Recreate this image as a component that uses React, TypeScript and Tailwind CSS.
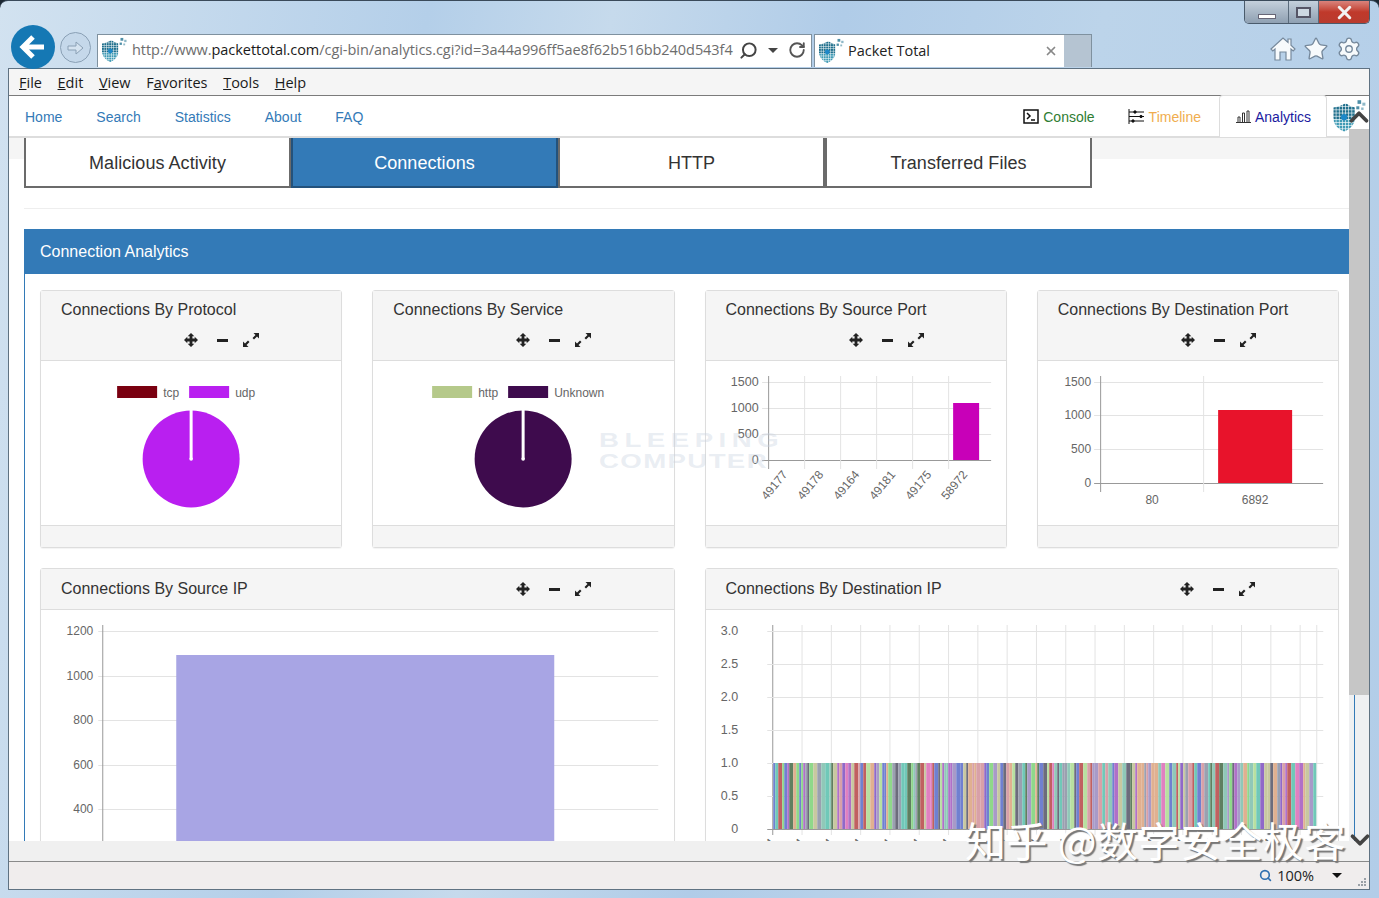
import { Star, Settings, RotateCw, Search, X, ChevronDown, ChevronUp } from 'lucide-react'

const CHROME = 'font-["Open_Sans","Noto_Sans",sans-serif]'
const SANS = 'font-["Liberation_Sans",Arial,sans-serif]'

const MENU = [
  { before: '', mark: 'F', after: 'ile' },
  { before: '', mark: 'E', after: 'dit' },
  { before: '', mark: 'V', after: 'iew' },
  { before: 'F', mark: 'a', after: 'vorites' },
  { before: '', mark: 'T', after: 'ools' },
  { before: '', mark: 'H', after: 'elp' },
]

const TABS = ['Malicious Activity', 'Connections', 'HTTP', 'Transferred Files']

const STRIPE_COLORS = [
  '#a89ac8', '#8fd88a', '#d8a0a8', '#6c6c7c', '#b070c8', '#90c8b8', '#e0b090', '#5f7f60',
  '#c06060', '#7080d0', '#c8c8a0', '#70c8b8', '#e080c0', '#9aa0b0', '#b8e0a0', '#9068c8',
]

// bars of the destination IP chart, one colour per address
function stripes() {
  const out: { x: number; w: number; c: string }[] = []
  let seed = 7
  let x = 0
  while (x < 543) {
    seed = (seed * 137 + 59) % 1009
    const w = 2 + (seed % 3)
    out.push({ x, w, c: STRIPE_COLORS[seed % STRIPE_COLORS.length] })
    x += w
  }
  return out
}

function Shield({ size = 26, id }: { size?: number; id: string }) {
  const dots = []
  for (let r = 0; r < 9; r++) {
    for (let c = 0; c < 8; c++) {
      dots.push(<rect key={`${r}-${c}`} x={1 + c * 2.6} y={4 + r * 2.6} width={2.1} height={2.1} fill={r > 4 ? '#3f9ab4' : '#1f6f8c'} />)
    }
  }
  return (
    <svg width={size} height={size} viewBox="0 0 28 28" className="shrink-0">
      <clipPath id={id}>
        <path d="M1 7Q8 6 11 3q3 3 8 4v8q0 8-9 12Q1 23 1 15z" />
      </clipPath>
      <g clipPath={`url(#${id})`}>{dots}</g>
      <circle cx="10" cy="15" r="2.6" fill="#1e88c8" />
      <rect x={21} y={1} width={3} height={3} fill="#4f8fa8" />
      <rect x={25} y={3} width={2.5} height={2.5} fill="#8fb8c8" />
      <rect x={20} y={6} width={2.5} height={2.5} fill="#4f8fa8" />
      <rect x={24} y={7} width={2} height={2} fill="#8fb8c8" />
    </svg>
  )
}

function HomeIcon() {
  return (
    <svg width="26" height="26" viewBox="0 0 26 26" fill="#f7fafc" stroke="#76899c" strokeWidth="1.200">
      <path d="M1 13 13 2l5 4.500V3h3v6.300L25 13l-1.800 2L21 13v11h-5v-8h-6v8H5V13l-2.200 2z" />
    </svg>
  )
}

function MoveIcon() {
  return (
    <svg width="14" height="14" viewBox="0 0 14 14" fill="#222">
      <path d="M7 0 10.300 3.300H8.400V5.600H10.700V3.700L14 7l-3.300 3.300V8.400H8.400v2.300h1.900L7 14l-3.300-3.300h1.900V8.400H3.300v1.900L0 7l3.300-3.300v1.900h2.300V3.300H3.700z" />
    </svg>
  )
}

function CardTools() {
  return (
    <div className="flex items-center h-[14px]">
      <MoveIcon />
      <span className="w-[11px] h-[3px] bg-[#222] ml-[19px]" />
      <svg width="16" height="14" viewBox="0 0 16 14" fill="#222" className="ml-[15px]">
        <path d="M16 0v5.500l-2-2-3 3-1.500-1.500 3-3-2-2zM0 14V8.500l2 2 3-3L6.500 9l-3 3 2 2z" />
      </svg>
    </div>
  )
}

function Card({ title, wide, children }: { title: string; wide?: boolean; children: React.ReactNode }) {
  return (
    <div className={`border border-[#ddd] rounded-[3px] bg-white shadow-[0_1px_1px_rgba(0,0,0,0.05)] ${wide ? 'col-span-2' : ''}`}>
      <div className={`bg-[#f5f5f5] border-b border-[#ddd] pl-[20px] ${wide ? 'h-[41px] flex items-center justify-between pr-[83px]' : 'h-[70px] pt-[9px]'}`}>
        <div className="text-[16px] leading-[20px] text-[#333]">{title}</div>
        {wide ? <CardTools /> : <div className="flex justify-center mt-[13px] pl-[41px]"><CardTools /></div>}
      </div>
      {children}
      {!wide && <div className="h-[22px] bg-[#f5f5f5] border-t border-[#ddd]" />}
    </div>
  )
}

function PieChart({ a, ac, b, bc, fill, ax, bx }: { a: string; ac: string; b: string; bc: string; fill: string; ax: number; bx: number }) {
  return (
    <svg viewBox="1 0 300 164" className="block w-full h-[164px]">
      <rect x={ax} y={25} width={40} height={12} fill={ac} />
      <text x={ax + 46} y={36} fontSize="12" fill="#666">{a}</text>
      <rect x={bx} y={25} width={40} height={12} fill={bc} />
      <text x={bx + 46} y={36} fontSize="12" fill="#666">{b}</text>
      <circle cx={151} cy={98} r={48.500} fill={fill} />
      <path d="M151 98V49" stroke="#fff" strokeWidth="3" />
      <circle cx={151} cy={98} r={1.800} fill="#fff" />
    </svg>
  )
}

function SourcePortChart() {
  const ys = [{ y: 21, t: '1500' }, { y: 47, t: '1000' }, { y: 73, t: '500' }, { y: 99, t: '0' }]
  const xs = [63, 99, 135, 171, 207, 243]
  const names = ['49177', '49178', '49164', '49181', '49175', '58972']
  return (
    <svg viewBox="1 0 300 164" className="block w-full h-[164px]">
      {ys.map((l) => (
        <g key={l.t}>
          <line x1={57} x2={286} y1={l.y + 0.5} y2={l.y + 0.5} stroke={l.t === '0' ? '#999' : '#e3e3e3'} />
          <text x={53.500} y={l.y + 3.500} fontSize="12.500" fill="#666" textAnchor="end">{l.t}</text>
        </g>
      ))}
      {xs.map((x, i) => (
        <g key={x}>
          <line x1={x + 0.5} x2={x + 0.5} y1={15} y2={108} stroke={i === 0 ? '#999' : '#e3e3e3'} />
          <text x={x + 20} y={114} fontSize="12" fill="#666" textAnchor="end" transform={`rotate(-50 ${x + 20} 114)`}>{names[i]}</text>
        </g>
      ))}
      <rect x={248} y={42} width={26} height={57} fill="#c800b8" />
    </svg>
  )
}

function DestPortChart() {
  const ys = [{ y: 21, t: '1500' }, { y: 54, t: '1000' }, { y: 88, t: '500' }, { y: 122, t: '0' }]
  return (
    <svg viewBox="1 0 300 164" className="block w-full h-[164px]">
      {ys.map((l) => (
        <g key={l.t}>
          <line x1={57} x2={286} y1={l.y + 0.5} y2={l.y + 0.5} stroke={l.t === '0' ? '#999' : '#e3e3e3'} />
          <text x={54} y={l.y + 3.500} fontSize="12" fill="#666" textAnchor="end">{l.t}</text>
        </g>
      ))}
      <line x1={63.500} x2={63.500} y1={15} y2={131} stroke="#999" />
      <line x1={166.500} x2={166.500} y1={15} y2={131} stroke="#e3e3e3" />
      <rect x={181} y={49} width={74} height={73} fill="#e8132b" />
      <text x={115} y={143} fontSize="12" fill="#666" textAnchor="middle">80</text>
      <text x={218} y={143} fontSize="12" fill="#666" textAnchor="middle">6892</text>
    </svg>
  )
}

function SourceIpChart() {
  const ys = [{ y: 21, t: '1200' }, { y: 66, t: '1000' }, { y: 110, t: '800' }, { y: 155, t: '600' }, { y: 199, t: '400' }]
  return (
    <svg viewBox="1 0 632 260" className="block w-full h-[260px]">
      {ys.map((l) => (
        <g key={l.t}>
          <line x1={58} x2={618} y1={l.y + 0.5} y2={l.y + 0.5} stroke="#e3e3e3" />
          <text x={53} y={l.y + 3.500} fontSize="12" fill="#666" textAnchor="end">{l.t}</text>
        </g>
      ))}
      <line x1={62.500} x2={62.500} y1={15} y2={260} stroke="#999" />
      <rect x={136} y={45} width={378} height={215} fill="#a8a5e4" />
    </svg>
  )
}

function DestIpChart() {
  const ys = ['3.0', '2.5', '2.0', '1.5', '1.0', '0.5', '0']
  const vs = Array.from({ length: 19 }, (_, i) => 67 + i * 29.300)
  return (
    <svg viewBox="1 0 632 260" className="block w-full h-[260px]">
      {vs.map((x, i) => (
        <g key={x}>
          <line x1={x + 0.5} x2={x + 0.5} y1={15} y2={225} stroke={i === 0 ? '#999' : '#e3e3e3'} />
          <text x={x + 3} y={233} fontSize="12" fill="#666" textAnchor="end" transform={`rotate(-50 ${x + 3} 233)`}>10.0.0.4</text>
        </g>
      ))}
      <line x1={611.500} x2={611.500} y1={15} y2={225} stroke="#e3e3e3" />
      {ys.map((t, i) => (
        <g key={t}>
          <line x1={62} x2={618} y1={21.500 + i * 33} y2={21.500 + i * 33} stroke={t === '0' ? '#999' : '#e3e3e3'} />
          <text x={33} y={25 + i * 33} fontSize="12.500" fill="#666" textAnchor="end">{t}</text>
        </g>
      ))}
      {stripes().map((s) => (
        <rect key={s.x} x={68 + s.x} y={153} width={s.w} height={66} fill={s.c} />
      ))}
    </svg>
  )
}

export default function App() {
  return (
    <div className="w-[1379px] h-[898px] bg-[#1c2833]">
      <div className={`relative w-full h-full overflow-hidden rounded-t-[8px] border-t border-[#3a4a5a] flex flex-col bg-[linear-gradient(100deg,#d2e2f0_0%,#b4cfe9_28%,#c6daec_40%,#b0cce8_55%,#bcd4ea_72%,#b2cde8_100%)] pl-[8px] pr-[9px] pb-[8px] ${CHROME}`}>
        {/* Title bar */}
        <div className="h-[23px] flex justify-end">
          <div className="w-[126px] h-[23px] flex border border-t-0 border-[#4a5b6c] rounded-b-[5px] overflow-hidden">
            <div className="w-[44px] flex items-center justify-center bg-gradient-to-b from-[#c4d0dc] to-[#8fa0b2] border-r border-[#5a6b7c]">
              <span className="w-[18px] h-[5px] bg-white border border-[#667] mt-[8px]" />
            </div>
            <div className="w-[30px] flex items-center justify-center bg-gradient-to-b from-[#c4d0dc] to-[#8fa0b2] border-r border-[#5a6b7c]">
              <span className="w-[15px] h-[11px] border-2 border-[#556] bg-[#cdd8e2]" />
            </div>
            <div className="flex-1 flex items-center justify-center bg-gradient-to-b from-[#d9837c] via-[#c0392b] to-[#b93b2e]">
              <X size={21} strokeWidth={3.500} color="#f2f2f2" />
            </div>
          </div>
        </div>

        {/* Address and tabs */}
        <div className="h-[44px] flex items-start pt-[11px]">
          <div className="w-[44px] h-[44px] -mt-[10px] ml-[3px] rounded-full bg-[#1578b4] flex items-center justify-center z-10 shrink-0">
            <svg width="28" height="26" viewBox="0 0 28 26" fill="none" stroke="#fff" strokeWidth="5">
              <path d="M25 13H5M14 3 4 13l10 10" />
            </svg>
          </div>
          <div className="w-[31px] h-[31px] -mt-[3px] ml-[5px] rounded-full border border-[#8aa0b5] bg-[#c5d8ea] flex items-center justify-center shrink-0">
            <svg width="18" height="16" viewBox="0 0 18 16" fill="#d5e3f0" stroke="#8aa0b5">
              <path d="M1 6h8V2l7 6-7 6v-4H1z" />
            </svg>
          </div>
          <div className="w-[715px] h-[33px] ml-[6px] -mt-[1px] bg-white border border-[#7f919f] border-b-0 flex items-center pl-[3px] pb-[2px] shrink-0">
            <Shield id="shield-url" />
            <span className="ml-[5px] w-[602px] whitespace-nowrap overflow-hidden text-[14.500px] text-[#6d6d6d] tracking-[-0.05px]">
              http://www.<span className="text-[#1a1a1a]">packettotal.com</span>/cgi-bin/analytics.cgi?id=3a44a996ff5ae8f62b516bb240d543f4
            </span>
            <Search size={19} strokeWidth={2.500} color="#444" className="ml-[5px] -scale-x-100" />
            <span className="ml-[10px] border-x-[5px] border-x-transparent border-t-[5px] border-t-[#444]" />
            <RotateCw size={18} strokeWidth={2.500} color="#555" className="ml-[10px]" />
          </div>
          <div className="w-[250px] h-[33px] ml-[2px] -mt-[1px] bg-white border-t border-l border-[#7f919f] flex items-center pl-[3px] shrink-0">
            <Shield id="shield-tab" />
            <span className="ml-[4px] text-[14.500px] text-[#222]">Packet Total</span>
            <X size={14} strokeWidth={3} color="#888" className="ml-auto mr-[6px]" />
          </div>
          <div className="w-[28px] h-[33px] -mt-[1px] bg-[#b5c4d2] border-t border-r border-[#7f919f] shrink-0" />
          <div className="flex items-center gap-[7px] ml-[178px] mt-[1px]">
            <HomeIcon />
            <Star size={26} color="#76899c" fill="#f7fafc" strokeWidth={1.250} />
            <Settings size={26} color="#76899c" fill="#f7fafc" strokeWidth={1.250} />
          </div>
        </div>

        {/* Browser viewport */}
        <div className="flex-1 min-h-0 flex flex-col border-l border-r border-b border-t border-[#5f7282] bg-white">
          <div className="h-[27px] bg-[#f5f5f5] border-b border-[#7b7b7b] flex items-center pl-[10px] pt-[2px] gap-[15.600px] text-[14.500px] text-[#1a1a1a] shrink-0">
            {MENU.map((m) => (
              <span key={m.mark + m.after}>
                {m.before}
                <u>{m.mark}</u>
                {m.after}
              </span>
            ))}
          </div>

          {/* Site nav */}
          <nav className={`h-[42px] border-b-2 border-[#ddd] flex items-center pl-[16px] text-[14px] shrink-0 ${SANS}`}>
            {['Home', 'Search', 'Statistics', 'About', 'FAQ'].map((n) => (
              <a key={n} className="mr-[34px] pt-[2px] text-[#337ab7]">{n}</a>
            ))}
            <div className="ml-auto flex items-center h-full">
              <svg width="16" height="15" viewBox="0 0 16 15" fill="none" stroke="#111" strokeWidth="1.500">
                <rect x="1" y="1" width="14" height="13" />
                <path d="m4 4 3 3-3 3M8 11h4" />
              </svg>
              <span className="ml-[4px] pt-[2px] text-[#2e7d32]">Console</span>
              <svg width="17" height="15" viewBox="0 0 17 15" fill="#111" stroke="#111" className="ml-[33px]">
                <path d="M1 0v15M1 3h15M1 7.500h15M1 12h15" fill="none" />
                <circle cx="7" cy="3" r="1.200" />
                <circle cx="13" cy="7.500" r="1.200" />
                <circle cx="5" cy="12" r="1.200" />
              </svg>
              <span className="ml-[4px] pt-[2px] text-[#f0ad4e]">Timeline</span>
              <div className="ml-[18px] w-[108px] h-[42px] bg-white border border-b-0 border-[#ddd] rounded-t-[4px] flex items-center pl-[16px]">
                <svg width="15" height="13" viewBox="0 0 15 13" fill="none" stroke="#333">
                  <path d="M0 12.500h15M2 12V7h2v5M6.500 12V3h2v9M11 12V1h2v11" />
                </svg>
                <span className="ml-[4px] pt-[2px] text-[#1a1aa0]">Analytics</span>
              </div>
              <div className="w-[42px] pl-[5px]">
                <Shield size={34} id="shield-nav" />
              </div>
            </div>
          </nav>

          {/* Page */}
          <div className={`relative flex-1 min-h-0 overflow-hidden ${SANS}`}>
            <div className="absolute top-0 left-0 right-0 h-[21px] bg-[#f5f5f5]" />
            {/* Scrollbar track sits behind the panel edge */}
            <div className="absolute top-0 bottom-0 right-0 w-[20px] bg-[#eff0f2]" />
            <div className="relative pl-[15px] w-[1346px]">
              <div className="flex w-[1068px] h-[50px]">
                {TABS.map((t, i) => (
                  <div
                    key={t}
                    className={`flex-1 flex items-center justify-center pt-[2px] text-[18px] tracking-[0.05px] border-2 border-t-0 ${i === 1 ? 'bg-[#337ab7] text-white border-[#23527c]' : 'bg-white text-[#333] border-[#6b6b6b]'}`}
                  >
                    {t}
                  </div>
                ))}
              </div>
              <div className="h-px bg-[#eee] mt-[20px] mr-[5px]" />

              {/* Connection Analytics panel */}
              <div className="mt-[20px] border-x border-[#337ab7]">
                <div className="h-[45px] bg-[#337ab7] flex items-center pl-[16px] text-[16px] text-white -ml-px">Connection Analytics</div>
                <div className="pt-[16px] pl-[15px] pr-[15px] grid grid-cols-4 gap-x-[30px] gap-y-[20px]">
                  <Card title="Connections By Protocol">
                    <PieChart a="tcp" ac="#7a0010" b="udp" bc="#b91ff0" fill="#b91ff0" ax={77} bx={149} />
                  </Card>
                  <Card title="Connections By Service">
                    <PieChart a="http" ac="#b5c98a" b="Unknown" bc="#3e0b4d" fill="#3e0b4d" ax={60} bx={136} />
                  </Card>
                  <Card title="Connections By Source Port">
                    <SourcePortChart />
                  </Card>
                  <Card title="Connections By Destination Port">
                    <DestPortChart />
                  </Card>
                  <Card wide title="Connections By Source IP">
                    <SourceIpChart />
                  </Card>
                  <Card wide title="Connections By Destination IP">
                    <DestIpChart />
                  </Card>
                </div>
              </div>
            </div>

            {/* Bleeping Computer watermark */}
            <div className="absolute left-[590px] top-[292px] origin-left scale-x-[1.38] text-[20px] leading-[21px] text-[#c9d2e0]/40 font-bold pointer-events-none">
              <div className="tracking-[4px]">BLEEPING</div>
              <div className="tracking-[1px]">COMPUTER</div>
            </div>
          </div>

          <div className="h-[21px] bg-[#f0f0f0] border-b border-[#8a8a8a] shrink-0" />
          <div className="h-[27px] bg-[#f0eded] flex items-center justify-end text-[14.500px] text-[#222] shrink-0">
            <Search size={13} strokeWidth={3} color="#2f6fb0" />
            <span className="ml-[5px]">100%</span>
            <span className="ml-[18px] border-x-[5px] border-x-transparent border-t-[5px] border-t-[#111]" />
            <svg width="9" height="9" viewBox="0 0 9 9" fill="#9aa0a6" className="ml-[16px] mr-[2px] self-end mb-[2px]">
              <rect x="6" y="0" width="2" height="2" />
              <rect x="3" y="3" width="2" height="2" />
              <rect x="6" y="3" width="2" height="2" />
              <rect x="0" y="6" width="2" height="2" />
              <rect x="3" y="6" width="2" height="2" />
              <rect x="6" y="6" width="2" height="2" />
            </svg>
          </div>
        </div>

        {/* Scrollbar thumb and arrows, above the nav */}
        <div className="absolute left-[1349px] top-[128px] w-[20px] h-[566px] bg-[#c6c6c6]" />
        <ChevronUp size={30} strokeWidth={3} color="#444" className="absolute left-[1344px] top-[101px]" />
        <ChevronDown size={30} strokeWidth={3} color="#444" className="absolute left-[1345px] top-[824px]" />

        {/* 知乎 watermark */}
        <div className="absolute left-[965px] top-[816px] whitespace-nowrap text-[41px] leading-[44px] tracking-[0.5px] text-white [text-shadow:2px_2px_1px_#777] font-['Noto_Sans_CJK_SC',sans-serif] pointer-events-none">
          知乎 @数字安全极客
        </div>
      </div>
    </div>
  )
}
